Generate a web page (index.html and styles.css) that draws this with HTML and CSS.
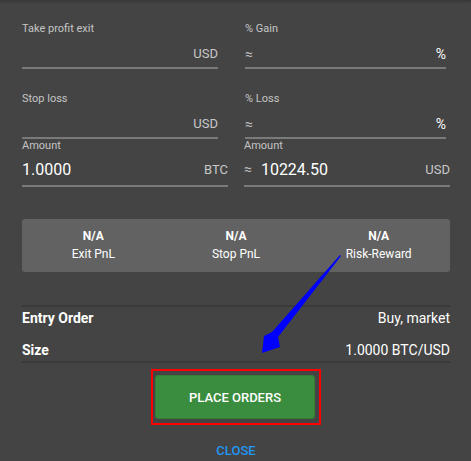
FILE: index.html
```html
<!DOCTYPE html>
<html>
<head>
    <meta charset="UTF-8">
    <meta name="viewport" content="width=device-width, initial-scale=1.0">
    <title>Place orders</title>
    <link rel="stylesheet" href="styles.css">
</head>
<body>
    <div class="panel">
        <div class="fields">
            <div class="field short">
                <div class="label">Take profit exit</div>
                <div class="input"><span class="value"></span><span class="unit">USD</span></div>
            </div>
            <div class="field short right">
                <div class="label">% Gain</div>
                <div class="input"><span class="approx">&asymp;</span><span class="value"></span><span class="unit light">%</span></div>
            </div>

            <div class="field short gap">
                <div class="label">Stop loss</div>
                <div class="input"><span class="value"></span><span class="unit">USD</span></div>
            </div>
            <div class="field short right gap">
                <div class="label">% Loss</div>
                <div class="input"><span class="approx">&asymp;</span><span class="value"></span><span class="unit light">%</span></div>
            </div>

            <div class="field amount">
                <div class="label">Amount</div>
                <div class="input"><span class="value">1.0000</span><span class="unit">BTC</span></div>
            </div>
            <div class="field amount">
                <div class="label">Amount</div>
                <div class="input"><span class="approx">&asymp;</span><span class="value">10224.50</span><span class="unit">USD</span></div>
            </div>
        </div>

        <div class="summary">
            <div class="summary-item">
                <div class="summary-value">N/A</div>
                <div class="summary-label">Exit PnL</div>
            </div>
            <div class="summary-item">
                <div class="summary-value">N/A</div>
                <div class="summary-label">Stop PnL</div>
            </div>
            <div class="summary-item">
                <div class="summary-value">N/A</div>
                <div class="summary-label">Risk-Reward</div>
            </div>
        </div>

        <div class="details">
            <div class="detail-row">
                <span class="detail-name">Entry Order</span>
                <span class="detail-value">Buy, market</span>
            </div>
            <div class="detail-row">
                <span class="detail-name">Size</span>
                <span class="detail-value">1.0000 BTC/USD</span>
            </div>
        </div>

        <div class="actions">
            <div class="highlight">
                <button class="place-btn">PLACE ORDERS</button>
            </div>
            <a class="close-link">CLOSE</a>
        </div>
    </div>

    <!-- annotation arrow -->
    <svg class="arrow" width="471" height="461" viewBox="0 0 471 461">
        <polygon fill="#0000ff" points="340,255 341,256 278,337 280,347 262,353 264,336 272,332"/>
    </svg>
</body>
</html>
```

FILE: styles.css
```css
* {
    box-sizing: border-box;
    margin: 0;
    padding: 0;
}

body {
    font-family: Roboto, "Liberation Sans", Arial, sans-serif;
    background-color: #444444;
    color: #ffffff;
    width: 471px;
    height: 461px;
    overflow: hidden;
    position: relative;
}

body::before {
    content: "";
    display: block;
    height: 4px;
    background: linear-gradient(#373737, #444444);
    position: absolute;
    top: 0;
    left: 0;
    right: 0;
}

.panel {
    padding: 22px 21px 0 22px;
}

.fields {
    display: grid;
    grid-template-columns: 1fr 1fr;
    column-gap: 16px;
}

.label {
    font-size: 11px;
    line-height: 14px;
    color: #c4c4c4;
}

.input {
    display: flex;
    align-items: center;
    border-bottom: 2px solid #7a7a7a;
}

.short .input {
    height: 33px;
    padding-top: 4px;
    font-size: 13px;
}

.field.short {
    margin-right: 10px;
}

.field.short.right {
    margin-left: 1px;
    margin-right: 4px;
}

.field.gap {
    margin-top: 23px;
}

.value {
    flex: 1;
}

.unit {
    color: #c8c8c8;
    font-size: 13px;
}

.unit.light {
    color: #ffffff;
    font-size: 14px;
}

.approx {
    color: #bbbbbb;
    font-size: 14px;
    margin-right: 9px;
}

.amount .input {
    height: 34px;
    font-size: 16px;
}

.summary {
    margin-top: 32px;
    background: #626262;
    border-radius: 3px;
    display: flex;
    padding: 9px 0 10px;
}

.summary-item {
    flex: 1;
    text-align: center;
    font-size: 12px;
}

.summary-value {
    font-weight: bold;
    line-height: 16px;
}

.summary-label {
    line-height: 16px;
    margin-top: 2px;
}

.details {
    margin-top: 33px;
    border-top: 2px solid #3a3a3a;
    border-bottom: 2px solid #3a3a3a;
    display: flex;
    flex-direction: column;
    gap: 10px;
}

.detail-row {
    display: flex;
    justify-content: space-between;
    line-height: 22px;
    font-size: 14px;
}

.detail-name {
    font-weight: bold;
}

.actions {
    display: flex;
    flex-direction: column;
    align-items: center;
}

.highlight {
    margin-top: 6px;
    border: 2px solid #ff0000;
    padding: 4px 4px 4px 2px;
}

.place-btn {
    display: block;
    width: 160px;
    height: 44px;
    background: #3a8c3e;
    border: 1px solid #357f38;
    border-radius: 3px;
    color: #ffffff;
    font-family: Roboto, "Liberation Sans", Arial, sans-serif;
    font-size: 13px;
    font-weight: 500;
}

.close-link {
    margin-top: 18px;
    color: #2196f3;
    font-size: 13px;
    font-weight: 500;
    line-height: 16px;
}

.arrow {
    position: absolute;
    top: 0;
    left: 0;
    pointer-events: none;
}
```
